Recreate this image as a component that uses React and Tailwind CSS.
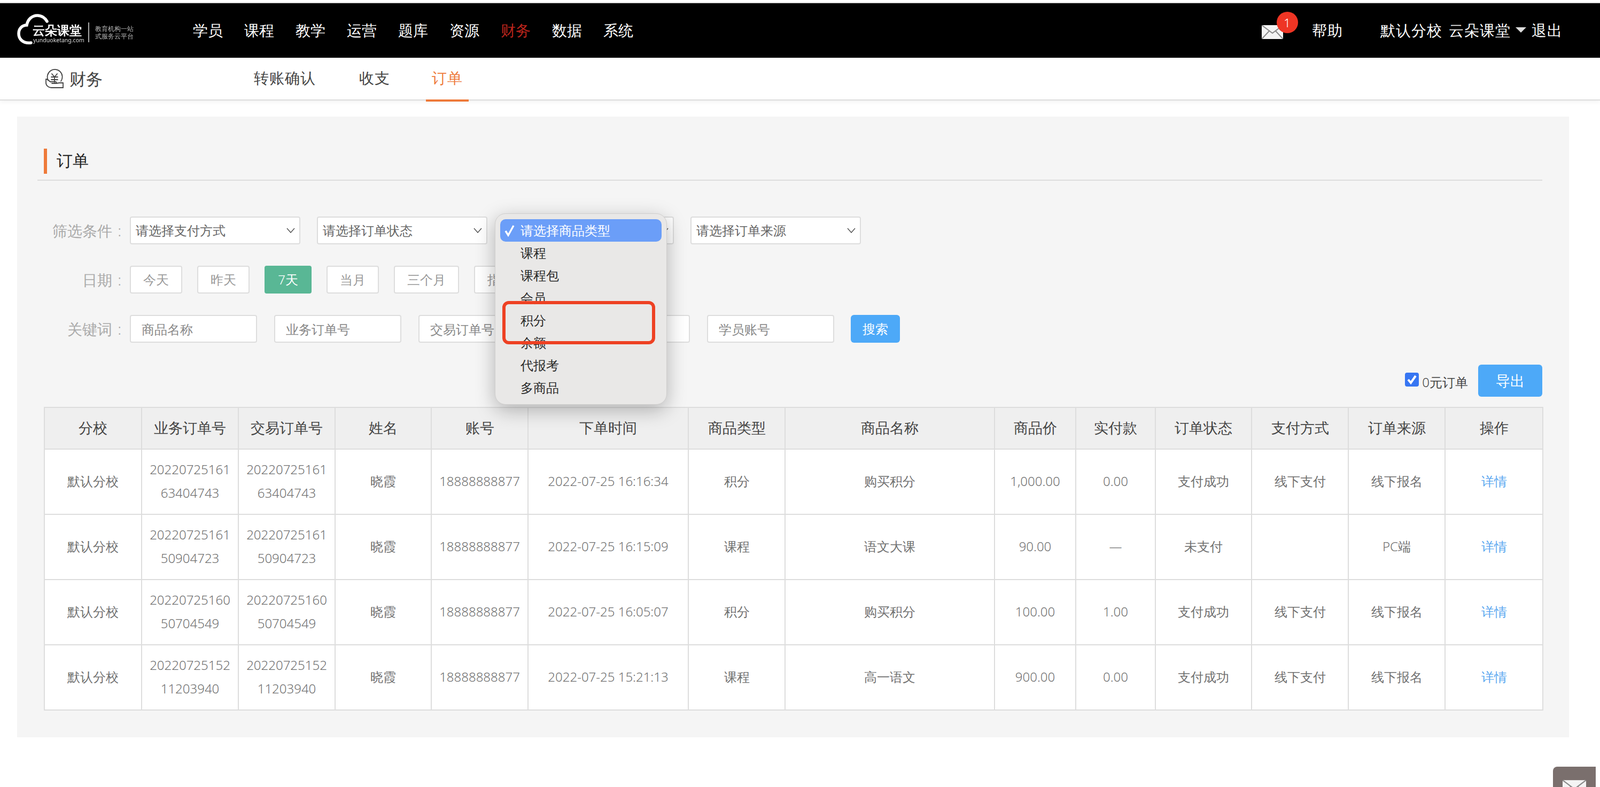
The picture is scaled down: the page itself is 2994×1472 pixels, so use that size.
import React from 'react';

const navItems = ['学员', '课程', '教学', '运营', '题库', '资源', '财务', '数据', '系统'];
const menuItems = ['课程', '课程包', '会员', '积分', '余额', '代报考', '多商品'];
const heads = ['分校', '业务订单号', '交易订单号', '姓名', '账号', '下单时间', '商品类型', '商品名称', '商品价', '实付款', '订单状态', '支付方式', '订单来源', '操作'];

const rows = [
  { a: '20220725161', b: '63404743', time: '2022-07-25 16:16:34', type: '积分', name: '购买积分', price: '1,000.00', paid: '0.00', status: '支付成功', pay: '线下支付', from: '线下报名' },
  { a: '20220725161', b: '50904723', time: '2022-07-25 16:15:09', type: '课程', name: '语文大课', price: '90.00', paid: '—', status: '未支付', pay: '', from: 'PC端' },
  { a: '20220725160', b: '50704549', time: '2022-07-25 16:05:07', type: '积分', name: '购买积分', price: '100.00', paid: '1.00', status: '支付成功', pay: '线下支付', from: '线下报名' },
  { a: '20220725152', b: '11203940', time: '2022-07-25 15:21:13', type: '课程', name: '高一语文', price: '900.00', paid: '0.00', status: '支付成功', pay: '线下支付', from: '线下报名' },
];

const Chevron = () => (
  <svg width="16" height="10" viewBox="0 0 16 10" fill="none" stroke="#555" strokeWidth="1.5">
    <path d="M1 1l7 8 7-8" />
  </svg>
);

const Envelope = ({ className }) => (
  <svg className={className} viewBox="0 0 40 26">
    <rect width="40" height="26" fill="#f4f4f4" />
    <path d="M0 0l20 15L40 0M0 26l14-15M40 26L26 11" fill="none" stroke="#8a8a8a" strokeWidth="2" />
  </svg>
);

const Logo = () => (
  <div className="w-[361px] h-full relative shrink-0 blur-[0.4px]">
    <svg className="absolute left-[32px] top-[20px]" width="60" height="58" viewBox="0 0 60 58" fill="none" stroke="#fff" strokeWidth="5.5" strokeLinecap="round">
      <path d="M26 54C10 56 3 46 3 37c0-9 6-16 15-16C20 10 28 3 38 3c8 0 15 5 18 11" />
    </svg>
    <div className="absolute left-[61px] top-[37px] text-[23px] leading-[26px] font-bold text-white whitespace-nowrap">云朵课堂</div>
    <div className="absolute left-[62px] top-[63px] text-[10.5px] leading-[12px] text-[#ddd] whitespace-nowrap">yunduoketang.com</div>
    <div className="absolute left-[165px] top-[36px] w-[2px] h-[37px] bg-[#aaa]"></div>
    <div className="absolute left-[178px] top-[41px] text-[12px] leading-[14px] text-[#bbb] whitespace-nowrap">教育机构一站<br />式服务云平台</div>
  </div>
);

const Header = () => (
  <div className="h-[102px] bg-black flex items-center text-[28px] text-white shrink-0">
    <Logo />
    <div className="flex gap-[40px] font-light pb-[2px]">
      {navItems.map((n) => (
        <span key={n} className={n === '财务' ? 'text-[#b8241c]' : ''}>{n}</span>
      ))}
    </div>
    <div className="ml-auto flex items-center pr-[70px] tracking-[1px] font-light pb-[2px]">
      <div className="relative w-[40px] h-[26px] mt-[8px] mr-[54px]">
        <Envelope className="w-[40px] h-[26px]" />
        <div className="absolute left-[28px] top-[-25px] w-[40px] h-[40px] rounded-full bg-[#ee3524] text-[22px] flex items-center justify-center">1</div>
      </div>
      <span>帮助</span>
      <span className="ml-[70px]">默认分校</span>
      <span className="ml-[12px]">云朵课堂</span>
      <span className="ml-[9px] w-0 h-0 border-x-[10px] border-x-transparent border-t-[10px] border-t-[#ddd]"></span>
      <span className="ml-[10px]">退出</span>
    </div>
  </div>
);

const SubNav = () => (
  <div className="h-[80px] bg-white border-b-2 border-[#ddd] shadow-[0_3px_8px_rgba(0,0,0,0.05)] flex shrink-0 relative">
    <div className="w-[475px] flex items-center pl-[84px] shrink-0">
      <svg width="36" height="36" viewBox="0 0 36 36" fill="none" stroke="#444" strokeWidth="1.8" strokeLinecap="round">
        <path d="M6 21A14 14 0 1 1 30 23" />
        <path d="M13 9l5 6 5-6M12 15h12M12 20h12M18 15v10" />
        <path d="M2 19c3 0 6 3 8 5h10c2 0 2 3 0 3h-7M2 19v7c0 5 5 9 10 9h22v-9h-7l-6 1" />
      </svg>
      <span className="ml-[10px] text-[31px] text-[#444] font-light">财务</span>
    </div>
    <div className="flex text-[28px] tracking-[1px] text-[#444] font-light">
      <span className="pt-[16px] mr-[81px]">转账确认</span>
      <span className="pt-[16px] mr-[67px]">收支</span>
      <div className="relative w-[80px] text-center text-[#ee7a3a] pt-[16px] h-[82px]">
        订单
        <div className="absolute left-0 right-0 bottom-0 h-[4px] bg-[#ee7a3a]"></div>
      </div>
    </div>
  </div>
);

const FakeSelect = ({ text }) => (
  <div className="w-[319px] h-[52px] bg-white border-2 border-[#ddd] rounded-[4px] flex items-center justify-between pl-[9px] pr-[8px] text-[24px] text-[#666] font-light">
    <span>{text}</span>
    <Chevron />
  </div>
);

const DateBtn = ({ text, className }) => (
  <div className={`h-[52px] bg-white border-2 border-[#ddd] rounded-[4px] flex items-center justify-center text-[24px] text-[#999] font-light ${className}`}>{text}</div>
);

const Field = ({ text }) => (
  <input
    placeholder={text}
    readOnly
    className="w-[238px] h-[52px] bg-white border-2 border-[#ddd] rounded-[4px] pl-[20px] text-[24px] font-light placeholder:text-[#888] outline-none"
  />
);

const Label = ({ text }) => (
  <div className="w-[161px] shrink-0 text-right text-[28px] text-[#aaa] font-light pr-[16px] whitespace-nowrap">
    {text}<span className="ml-[10px]">:</span>
  </div>
);

const Filters = () => (
  <div className="relative">
    <div className="flex items-center h-[52px]">
      <Label text="筛选条件" />
      <div className="flex gap-[30.5px]">
        <FakeSelect text="请选择支付方式" />
        <FakeSelect text="请选择订单状态" />
        <FakeSelect text="请选择商品类型" />
        <FakeSelect text="请选择订单来源" />
      </div>
    </div>
    <div className="flex items-center h-[52px] mt-[40px]">
      <Label text="日期" />
      <div className="flex gap-[28px]">
        <DateBtn text="今天" className="w-[98px]" />
        <DateBtn text="昨天" className="w-[98px]" />
        <DateBtn text="7天" className="w-[88px] !bg-[#59b795] !border-[#59b795] !text-white" />
        <DateBtn text="当月" className="w-[98px]" />
        <DateBtn text="三个月" className="w-[122px]" />
        <DateBtn text="指定" className="w-[98px]" />
      </div>
    </div>
    <div className="flex items-center h-[52px] mt-[40px]">
      <Label text="关键词" />
      <div className="flex gap-[32px]">
        <Field text="商品名称" />
        <Field text="业务订单号" />
        <Field text="交易订单号" />
        <Field text="学员姓名" />
        <Field text="学员账号" />
      </div>
      <div className="ml-[31px] w-[92px] h-[52px] rounded-[6px] bg-[#4da9f8] text-white text-[24px] font-light flex items-center justify-center">搜索</div>
    </div>

    <div className="absolute left-[844px] top-[-6px] w-[322px] h-[358px] bg-[#e9e8e7] border border-[#cfcecd] rounded-[20px] shadow-[0_10px_36px_rgba(0,0,0,0.28)] pt-[10px] px-[9px] text-[24px] text-[#2a2a2a]">
      <div className="h-[42px] bg-[#6b9ef8] rounded-[10px] text-white flex items-center">
        <svg className="ml-[8px] mr-[10px]" width="20" height="24" viewBox="0 0 20 24" fill="none" stroke="#fff" strokeWidth="3.4">
          <path d="M2 13l5 8L17 3" />
        </svg>
        <span>请选择商品类型</span>
      </div>
      {menuItems.map((m) => (
        <div key={m} className="h-[42px] flex items-center pl-[38px]">{m}</div>
      ))}
    </div>
    <div className="absolute left-[858px] top-[158px] w-[286px] h-[81px] border-[6px] border-[#ee4123] rounded-[12px]"></div>
  </div>
);

const OrdersTable = () => (
  <table className="w-[2804px] table-fixed border-collapse text-center text-[24px] text-[#707070] font-light">
    <colgroup>
      <col className="w-[182px]" />
      <col className="w-[181px]" />
      <col className="w-[181px]" />
      <col className="w-[180px]" />
      <col className="w-[181px]" />
      <col className="w-[300px]" />
      <col className="w-[181px]" />
      <col className="w-[392px]" />
      <col className="w-[152px]" />
      <col className="w-[149px]" />
      <col className="w-[180px]" />
      <col className="w-[181px]" />
      <col className="w-[181px]" />
      <col className="w-[183px]" />
    </colgroup>
    <thead>
      <tr className="h-[78px] bg-[#efefef] [&>th]:pb-[2px]">
        {heads.map((h) => (
          <th key={h} className="border-2 border-[#ddd] text-[27px] text-[#444] font-light">{h}</th>
        ))}
      </tr>
    </thead>
    <tbody className="bg-white">
      {rows.map((r) => (
        <tr key={r.b} className="h-[122px] [&>td]:pb-[2px]">
          <td className="border-2 border-[#ddd]">默认分校</td>
          <td className="border-2 border-[#ddd] leading-[44px]">{r.a}<br />{r.b}</td>
          <td className="border-2 border-[#ddd] leading-[44px]">{r.a}<br />{r.b}</td>
          <td className="border-2 border-[#ddd]">晓霞</td>
          <td className="border-2 border-[#ddd]">18888888877</td>
          <td className="border-2 border-[#ddd]">{r.time}</td>
          <td className="border-2 border-[#ddd]">{r.type}</td>
          <td className="border-2 border-[#ddd]">{r.name}</td>
          <td className="border-2 border-[#ddd]">{r.price}</td>
          <td className="border-2 border-[#ddd]">{r.paid}</td>
          <td className="border-2 border-[#ddd]">{r.status}</td>
          <td className="border-2 border-[#ddd]">{r.pay}</td>
          <td className="border-2 border-[#ddd]">{r.from}</td>
          <td className="border-2 border-[#ddd] text-[#5ba8f0]">详情</td>
        </tr>
      ))}
    </tbody>
  </table>
);

const App = () => {
  return (
    <div className="relative w-[2994px] h-[1472px] overflow-hidden bg-white flex flex-col [font-family:Roboto,'Noto_Sans_CJK_SC',sans-serif]">
      <div className="h-[6px] border-b-2 border-[#e2e2e2] shrink-0"></div>
      <Header />
      <SubNav />
      <div className="ml-[32px] mt-[30px] w-[2904px] h-[1161px] bg-[#f5f5f5] px-[50px] pt-[60px] shrink-0">
        <div className="ml-[-12px] pl-[12px] h-[60px] border-b-2 border-[#ddd] w-[2816px]">
          <div className="h-[47px] border-l-[6px] border-[#ee7a3a] pl-[18px] text-[30px] leading-[44px] text-[#222] font-light">订单</div>
        </div>
        <div className="mt-[67px]">
          <Filters />
        </div>
        <div className="flex items-center justify-end mt-[41px] h-[60px]">
          <span className="w-[26px] h-[26px] rounded-[4px] bg-[#3776f2] flex items-center justify-center mb-[4px]">
            <svg width="20" height="20" viewBox="0 0 20 20" fill="none" stroke="#fff" strokeWidth="4">
              <path d="M3 10l5 6 9-13" />
            </svg>
          </span>
          <span className="ml-[6px] mt-[6px] text-[24px] text-[#444] font-light">0元订单</span>
          <div className="ml-[19px] w-[120px] h-[60px] rounded-[6px] bg-[#4da9f8] text-white text-[27px] font-light flex items-center justify-center">导出</div>
        </div>
        <div className="mt-[19px]">
          <OrdersTable />
        </div>
      </div>
      <div className="absolute right-[8px] bottom-0 w-[80px] h-[38px] bg-[#7a6f6d] rounded-tl-[8px] overflow-hidden flex justify-center pt-[25px]">
        <Envelope className="w-[44px] h-[29px] shrink-0" />
      </div>
    </div>
  );
};

export default App;
